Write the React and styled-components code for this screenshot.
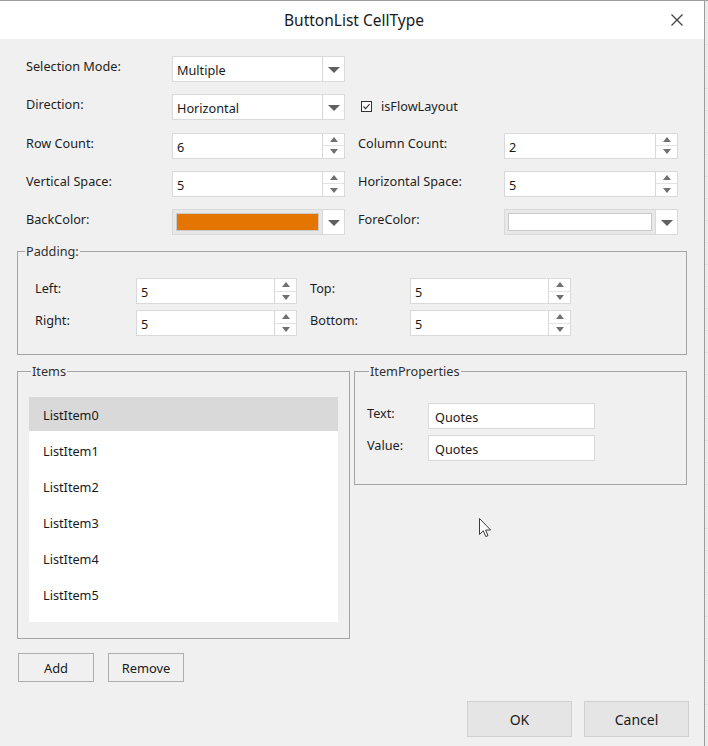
import React from 'react';
import styled, { createGlobalStyle } from 'styled-components';

const Global = createGlobalStyle`
  html, body { margin: 0; padding: 0; }
  body {
    background: #ebebeb;
    font-family: "Noto Sans", "Segoe UI", sans-serif;
    font-size: 12.7px;
    color: #1e1e1e;
  }
`;

const Screen = styled.div`
  display: flex;
  height: 746px;
  box-sizing: border-box;
  border-top: 1px solid #9d9d9d;
  overflow: hidden;
`;

const Dialog = styled.div`
  position: relative;
  width: 705px;
  flex: none;
  box-sizing: border-box;
  border-right: 1px solid #9d9d9d;
  background: #f0f0f0;
  display: flex;
  flex-direction: column;
`;

const Backdrop = styled.div`
  flex: 1;
  background: repeating-linear-gradient(to bottom, #ececec 0 21px, #dedede 21px 22px);
`;

const TitleBar = styled.div`
  height: 38px;
  background: #fff;
  display: grid;
  grid-template-columns: 1fr auto 1fr;
  align-items: center;
`;

const Title = styled.div`
  grid-column: 2;
  font-size: 15.5px;
  color: #1a1a1a;
  padding-left: 4px;
`;

const CloseButton = styled.div`
  grid-column: 3;
  justify-self: end;
  margin-right: 21px;
  width: 12px;
  height: 12px;
  display: flex;
`;

const Content = styled.div`
  padding: 17px 17px 0 17px;
  display: flex;
  flex-direction: column;
`;

const FormGrid = styled.div`
  margin-left: 9px;
  display: grid;
  grid-template-columns: 146px 173px 159px 174px;
  grid-auto-rows: 26px;
  row-gap: 12.25px;
`;

const Label = styled.div`
  align-self: start;
  padding-top: 2px;
  padding-left: ${p => p.$indent || 0}px;
  line-height: 17px;
  white-space: nowrap;
`;

const Box = styled.div`
  display: flex;
  box-sizing: border-box;
  height: 26px;
  border: 1px solid #d9d9d9;
  background: ${p => (p.$well ? '#e8e8e8' : '#fff')};
  width: ${p => (p.$w ? `${p.$w}px` : '100%')};
`;

const BoxText = styled.div`
  flex: 1;
  padding: 4px 0 0 ${p => p.$pad || 4}px;
  line-height: 18px;
  white-space: nowrap;
  color: #1a1a1a;
`;

const DropPart = styled.div`
  width: 21px;
  flex: none;
  border-left: 1px solid #d9d9d9;
  background: #fff;
  display: flex;
  align-items: center;
  justify-content: center;
`;

const DropArrow = styled.div`
  width: 0;
  height: 0;
  border-left: 6px solid transparent;
  border-right: 6px solid transparent;
  border-top: 6px solid #606060;
  margin-top: 1px;
`;

const SpinPart = styled.div`
  width: 21px;
  flex: none;
  border-left: 1px solid #d9d9d9;
  display: flex;
  flex-direction: column;
`;

const SpinHalf = styled.div`
  flex: 1;
  display: flex;
  align-items: center;
  justify-content: center;
  border-top: ${p => (p.$down ? '1px solid #e3e3e3' : 'none')};
`;

const SpinArrow = styled.div`
  width: 0;
  height: 0;
  border-left: 4px solid transparent;
  border-right: 4px solid transparent;
  ${p => (p.$down ? 'border-top: 5px solid #707070;' : 'border-bottom: 5px solid #707070;')}
`;

const SwatchWell = styled.div`
  flex: 1;
  padding: 3px;
  display: flex;
`;

const Swatch = styled.div`
  flex: 1;
  box-sizing: border-box;
  border: 1px solid #c9c9c9;
  background: ${p => p.$color};
`;

const CheckRow = styled.label`
  align-self: start;
  padding: 4px 0 0 16px;
  display: flex;
  align-items: center;
  gap: 9px;
  line-height: 17px;
`;

const CheckBox = styled.span`
  width: 11px;
  height: 11px;
  box-sizing: border-box;
  border: 1px solid #333;
  background: #fff;
  display: flex;
`;

const Group = styled.fieldset`
  margin: ${p => p.$mt || 0}px 0 0 0;
  border: 1px solid #a5a5a5;
  padding: ${p => p.$pad};
  min-width: 0;
  box-sizing: border-box;
  width: ${p => (p.$w ? `${p.$w}px` : 'auto')};
`;

const Legend = styled.legend`
  padding: 0 1px;
  margin-left: ${p => p.$indent}px;
  line-height: 16px;
  color: #303030;
`;

const PadGrid = styled.div`
  display: grid;
  grid-template-columns: 101px 161px 113px 161px;
  grid-auto-rows: 26px;
  row-gap: 6px;
`;

const ItemsRow = styled.div`
  margin-top: 8px;
  display: flex;
  align-items: flex-start;
  gap: 4px;
`;

const List = styled.div`
  height: 225px;
  background: #fff;
  display: flex;
  flex-direction: column;
  gap: 2px;
`;

const ListRow = styled.div`
  height: 34px;
  flex: none;
  box-sizing: border-box;
  padding: 2px 0 0 14px;
  display: flex;
  align-items: center;
  background: ${p => (p.$selected ? '#d9d9d9' : 'transparent')};
  color: #1a1a1a;
`;

const PropGrid = styled.div`
  display: grid;
  grid-template-columns: 61px 167px;
  grid-auto-rows: 26px;
  row-gap: 6px;
`;

const ButtonRow = styled.div`
  margin-top: 14px;
  margin-left: 1px;
  display: flex;
  gap: 14px;
`;

const Button = styled.button`
  font: inherit;
  font-size: ${p => (p.$primary ? '14px' : '12.9px')};
  color: #1a1a1a;
  width: ${p => p.$w}px;
  height: ${p => p.$h}px;
  padding: 0;
  box-sizing: border-box;
  border: 1px solid ${p => (p.$primary ? '#d0d0d0' : '#adadad')};
  background: ${p => (p.$primary ? '#e5e5e5' : '#f0f0f0')};
`;

const Footer = styled.div`
  margin-top: 19px;
  margin-right: -2px;
  display: flex;
  justify-content: flex-end;
  gap: 12px;
`;

const Pointer = styled.svg`
  position: absolute;
  left: 479px;
  top: 517px;
`;

const Select = ({ value }) => (
  <Box>
    <BoxText>{value}</BoxText>
    <DropPart><DropArrow /></DropPart>
  </Box>
);

const Spinner = ({ value }) => (
  <Box>
    <BoxText>{value}</BoxText>
    <SpinPart>
      <SpinHalf><SpinArrow /></SpinHalf>
      <SpinHalf $down><SpinArrow $down /></SpinHalf>
    </SpinPart>
  </Box>
);

const ColorPicker = ({ color }) => (
  <Box $well>
    <SwatchWell><Swatch $color={color} /></SwatchWell>
    <DropPart><DropArrow /></DropPart>
  </Box>
);

const TextBox = ({ value }) => (
  <Box>
    <BoxText $pad={6}>{value}</BoxText>
  </Box>
);

const items = ['ListItem0', 'ListItem1', 'ListItem2', 'ListItem3', 'ListItem4', 'ListItem5'];

export default function App() {
  return (
    <>
      <Global />
      <Screen>
        <Dialog>
          <TitleBar>
            <Title>ButtonList CellType</Title>
            <CloseButton>
              <svg width="12" height="12" viewBox="0 0 12 12">
                <path d="M0.5 0.5 L11.5 11.5 M11.5 0.5 L0.5 11.5" stroke="#444" strokeWidth="1.3" fill="none" />
              </svg>
            </CloseButton>
          </TitleBar>
          <Content>
            <FormGrid>
              <Label>Selection Mode:</Label>
              <Select value="Multiple" />
              <span />
              <span />

              <Label>Direction:</Label>
              <Select value="Horizontal" />
              <CheckRow>
                <CheckBox>
                  <svg width="9" height="9" viewBox="0 0 9 9">
                    <path d="M1.5 4.5 L3.6 6.6 L7.6 2.2" stroke="#333" strokeWidth="1.1" fill="none" />
                  </svg>
                </CheckBox>
                isFlowLayout
              </CheckRow>
              <span />

              <Label>Row Count:</Label>
              <Spinner value="6" />
              <Label $indent={13}>Column Count:</Label>
              <Spinner value="2" />

              <Label>Vertical Space:</Label>
              <Spinner value="5" />
              <Label $indent={13}>Horizontal Space:</Label>
              <Spinner value="5" />

              <Label>BackColor:</Label>
              <ColorPicker color="#e37500" />
              <Label $indent={13}>ForeColor:</Label>
              <ColorPicker color="#ffffff" />
            </FormGrid>

            <Group $mt={8} $pad="19px 17px 18px 17px">
              <Legend $indent={-10}>Padding:</Legend>
              <PadGrid>
                <Label>Left:</Label>
                <Spinner value="5" />
                <Label $indent={13}>Top:</Label>
                <Spinner value="5" />
                <Label>Right:</Label>
                <Spinner value="5" />
                <Label $indent={13}>Bottom:</Label>
                <Spinner value="5" />
              </PadGrid>
            </Group>

            <ItemsRow>
              <Group $w={333} $pad="18px 11px 16px 11px">
                <Legend $indent={2}>Items</Legend>
                <List>
                  {items.map((name, i) => (
                    <ListRow key={name} $selected={i === 0}>{name}</ListRow>
                  ))}
                </List>
              </Group>
              <Group $w={333} $pad="24px 12px 23px 12px">
                <Legend $indent={2}>ItemProperties</Legend>
                <PropGrid>
                  <Label>Text:</Label>
                  <TextBox value="Quotes" />
                  <Label>Value:</Label>
                  <TextBox value="Quotes" />
                </PropGrid>
              </Group>
            </ItemsRow>

            <ButtonRow>
              <Button $w={76} $h={29}>Add</Button>
              <Button $w={76} $h={29}>Remove</Button>
            </ButtonRow>

            <Footer>
              <Button $primary $w={105} $h={36}>OK</Button>
              <Button $primary $w={105} $h={36}>Cancel</Button>
            </Footer>
          </Content>
          <Pointer width="13" height="20" viewBox="0 0 13 20">
            <path d="M0.5 0.5 L0.5 16.5 L4.3 12.8 L6.8 18.6 L9 17.6 L6.6 12 L11.6 12 Z" fill="#fff" stroke="#3a3a3a" strokeWidth="1" strokeLinejoin="miter" />
          </Pointer>
        </Dialog>
        <Backdrop />
      </Screen>
    </>
  );
}
